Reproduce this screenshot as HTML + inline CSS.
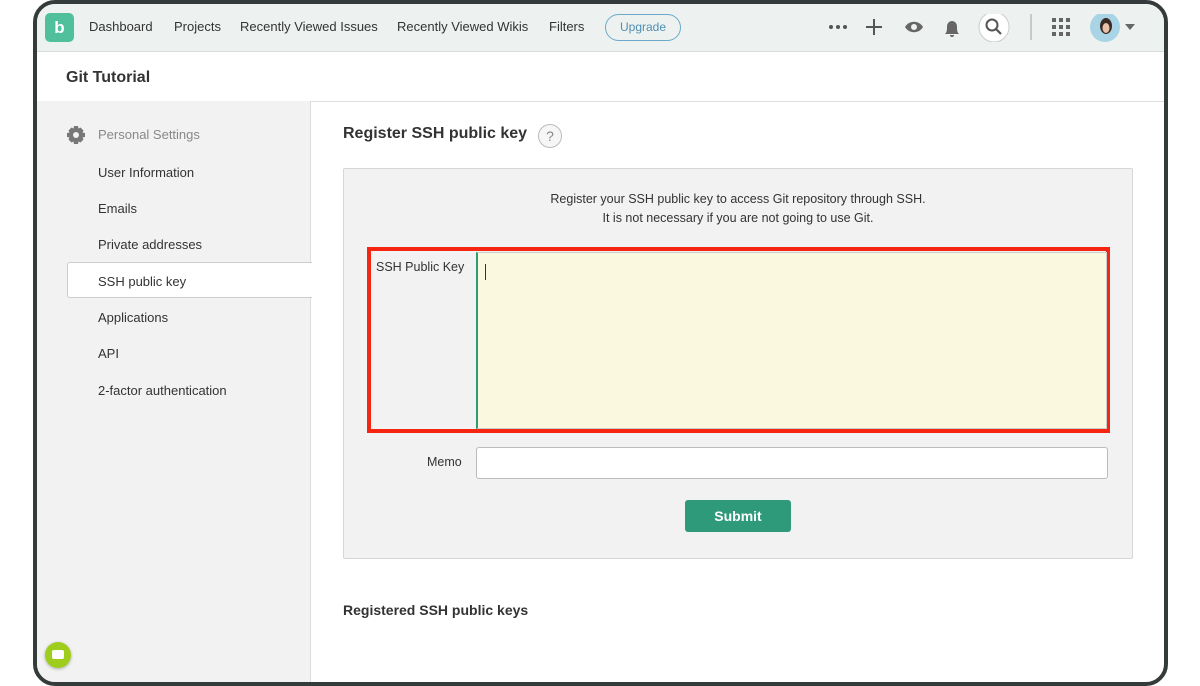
<!DOCTYPE html>
<html><head><meta charset="utf-8"><style>
*{box-sizing:border-box;margin:0;padding:0}
body{width:1200px;height:686px;background:#fff;font-family:"Liberation Sans",sans-serif;position:relative;overflow:hidden;color:#333}
.frame{position:absolute;left:33px;top:0;width:1135px;height:686px;border:4px solid #353a3b;border-radius:22px;overflow:hidden;background:#fff}
.hdr{position:absolute;left:0;top:0;right:0;height:48px;background:#edf2f0;border-bottom:1px solid #d6dcda}
.logo{position:absolute;left:8px;top:9px;width:29px;height:29px;border-radius:5px;background:#4fbf9c;color:#fff;font-weight:bold;font-size:17px;text-align:center;line-height:29px}
.nav{position:absolute;top:15px;font-size:13px;color:#333}
.upg{position:absolute;left:568px;top:10px;width:76px;height:27px;border:1.5px solid #6aa9c9;border-radius:14px;color:#4e8fb3;font-size:12px;text-align:center;line-height:24px}
.ttl{position:absolute;left:0;top:48px;right:0;height:50px;border-bottom:1px solid #ddd;font-weight:bold;font-size:16px;padding:17px 0 0 29px}
.side{position:absolute;left:0;top:97px;width:274px;bottom:0;background:#f2f2f2;border-right:1px solid #ddd}
.si{position:absolute;left:61px;font-size:13px;color:#333}
.sel{position:absolute;left:30px;top:161px;width:245px;height:36px;background:#fff;border:1px solid #ccc;border-right:none;border-radius:3px 0 0 3px}
.box{position:absolute;left:306px;top:164px;width:790px;height:391px;background:#f2f2f2;border:1px solid #d6d6d6;border-radius:2px}
</style></head><body>
<div class="frame">
<div class="hdr">
<div class="logo">b</div>
<div class="nav" style="left:52px">Dashboard</div>
<div class="nav" style="left:137px">Projects</div>
<div class="nav" style="left:203px">Recently Viewed Issues</div>
<div class="nav" style="left:360px">Recently Viewed Wikis</div>
<div class="nav" style="left:512px">Filters</div>
<div class="upg">Upgrade</div>
<svg style="position:absolute;left:790px;top:10px" width="320" height="28" viewBox="0 0 320 28">
<g fill="#555"><circle cx="4" cy="13" r="2"/><circle cx="11" cy="13" r="2"/><circle cx="18" cy="13" r="2"/></g>
<path d="M47 5v16M39 13h16" stroke="#555" stroke-width="2"/>
<path d="M78 13c4-7 14-7 18 0c-4 7-14 7-18 0z" fill="#666"/><circle cx="87" cy="13" r="3" fill="#edf2f0"/>
<path d="M118 20h14c-2-2-2-4-2-8a5 5 0 0 0-10 0c0 4 0 6-2 8zM123 21h4a2 2 0 0 1-4 0z" fill="#666"/>
<circle cx="167" cy="13" r="15" fill="#fff" stroke="#ccc"/><circle cx="165" cy="11" r="5.5" fill="none" stroke="#555" stroke-width="2"/><path d="M169 15l5 5" stroke="#555" stroke-width="2.2"/>
<path d="M204 -4v30" stroke="#bbb" stroke-width="1.5"/>
<g fill="#666"><rect x="225" y="4" width="4" height="4"/><rect x="232" y="4" width="4" height="4"/><rect x="239" y="4" width="4" height="4"/><rect x="225" y="11" width="4" height="4"/><rect x="232" y="11" width="4" height="4"/><rect x="239" y="11" width="4" height="4"/><rect x="225" y="18" width="4" height="4"/><rect x="232" y="18" width="4" height="4"/><rect x="239" y="18" width="4" height="4"/></g>
<circle cx="278" cy="13" r="15" fill="#a9d4e6"/><ellipse cx="279" cy="12" rx="6" ry="8" fill="#3a2a26"/><ellipse cx="279" cy="14" rx="3.5" ry="5" fill="#e9c0a8"/>
<path d="M298 10h10l-5 6z" fill="#666"/>
</svg>
</div>
<div class="ttl">Git Tutorial</div>
<div class="side">
<svg style="position:absolute;left:29px;top:24px" width="20" height="20" viewBox="0 0 20 20"><path d="M8 1h4l.5 2.5 2-1 3 3-1 2L19 8v4l-2.5.5 1 2-3 3-2-1L12 19H8l-.5-2.5-2 1-3-3 1-2L1 12V8l2.5-.5-1-2 3-3 2 1z" fill="#777"/><circle cx="10" cy="10" r="3" fill="#f2f2f2"/></svg>
<div class="si" style="top:26px;color:#888">Personal Settings</div>
<div class="si" style="top:64px">User Information</div>
<div class="si" style="top:100px">Emails</div>
<div class="si" style="top:136px">Private addresses</div>
<div class="sel"></div>
<div class="si" style="top:173px">SSH public key</div>
<div class="si" style="top:209px">Applications</div>
<div class="si" style="top:245px">API</div>
<div class="si" style="top:282px">2-factor authentication</div>
<div style="position:absolute;left:8px;top:541px;width:26px;height:26px;border-radius:50%;background:#9fcd1c;box-shadow:0 1px 3px rgba(0,0,0,.3)"><div style="position:absolute;left:7px;top:8px;width:12px;height:9px;background:#fff;border-radius:2px"></div></div>
</div>
<div style="position:absolute;left:306px;top:121px;font-weight:bold;font-size:16px">Register SSH public key</div>
<div style="position:absolute;left:501px;top:120px;width:24px;height:24px;border-radius:50%;border:1px solid #bbb;background:#f6f6f6;color:#888;text-align:center;line-height:22px;font-size:14px">?</div>
<div class="box">
<div style="position:absolute;left:0;right:0;top:21px;text-align:center;font-size:12.5px;line-height:19px">Register your SSH public key to access Git repository through SSH.<br>It is not necessary if you are not going to use Git.</div>
<div style="position:absolute;left:23px;top:78px;width:743px;height:186px;border:4px solid #f42612"></div>
<div style="position:absolute;left:32px;top:91px;font-size:12.5px">SSH Public Key</div>
<div style="position:absolute;left:132px;top:83px;width:631px;height:177px;background:#faf8de;border:1px solid #ccc;border-left:2px solid #2f9a7a"><div style="position:absolute;left:7px;top:11px;width:1px;height:16px;background:#333"></div></div>
<div style="position:absolute;left:83px;top:286px;font-size:12.5px">Memo</div>
<div style="position:absolute;left:132px;top:278px;width:632px;height:32px;background:#fff;border:1px solid #bbb;border-radius:3px"></div>
<div style="position:absolute;left:341px;top:331px;width:106px;height:32px;background:#2f9a7a;border-radius:3px;color:#fff;font-weight:bold;font-size:14px;text-align:center;line-height:32px">Submit</div>
</div>
<div style="position:absolute;left:306px;top:598px;font-weight:bold;font-size:14px">Registered SSH public keys</div>
</div>
</body></html>
